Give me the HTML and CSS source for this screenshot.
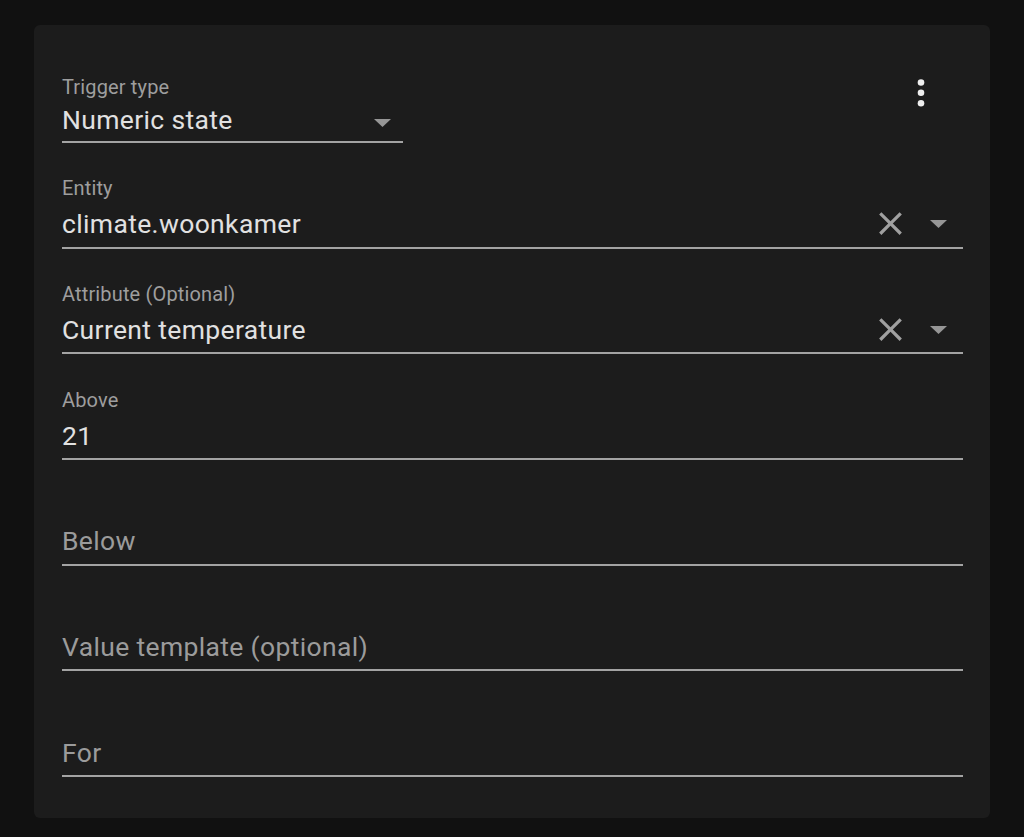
FILE: index.html
```html
<!DOCTYPE html>
<html lang="en">
<head>
<meta charset="utf-8">
<title>Numeric state trigger</title>
<link rel="stylesheet" href="styles.css">
</head>
<body>
<div class="card">
  <div class="row-top">
    <div class="field field-select">
      <div class="label">Trigger type</div>
      <div class="value-row">
        <span class="value">Numeric state</span>
        <svg class="caret caret-trigger" width="17" height="8" viewBox="0 0 17 8"><polygon points="0,0 17,0 8.5,8" /></svg>
      </div>
    </div>
    <div class="menu">
      <svg width="12" height="32" viewBox="0 0 12 32"><circle cx="6" cy="5.5" r="3.3"/><circle cx="6" cy="15.8" r="3.3"/><circle cx="6" cy="26.3" r="3.3"/></svg>
    </div>
  </div>

  <div class="field">
    <div class="label">Entity</div>
    <div class="value-row">
      <span class="value">climate.woonkamer</span>
      <svg class="close" width="39" height="39" viewBox="0 0 24 24"><path d="M19,6.41L17.59,5L12,10.59L6.41,5L5,6.41L10.59,12L5,17.59L6.41,19L12,13.41L17.59,19L19,17.59L13.41,12L19,6.41Z"/></svg>
      <svg class="caret" width="17" height="8" viewBox="0 0 17 8"><polygon points="0,0 17,0 8.5,8" /></svg>
    </div>
  </div>

  <div class="field">
    <div class="label">Attribute (Optional)</div>
    <div class="value-row">
      <span class="value">Current temperature</span>
      <svg class="close" width="39" height="39" viewBox="0 0 24 24"><path d="M19,6.41L17.59,5L12,10.59L6.41,5L5,6.41L10.59,12L5,17.59L6.41,19L12,13.41L17.59,19L19,17.59L13.41,12L19,6.41Z"/></svg>
      <svg class="caret" width="17" height="8" viewBox="0 0 17 8"><polygon points="0,0 17,0 8.5,8" /></svg>
    </div>
  </div>

  <div class="field">
    <div class="label">Above</div>
    <div class="value-row">
      <span class="value">21</span>
    </div>
  </div>

  <div class="field">
    <div class="value-row">
      <span class="value placeholder">Below</span>
    </div>
  </div>

  <div class="field">
    <div class="value-row">
      <span class="value placeholder">Value template (optional)</span>
    </div>
  </div>

  <div class="field">
    <div class="value-row">
      <span class="value placeholder">For</span>
    </div>
  </div>
</div>
</body>
</html>
```

FILE: styles.css
```css
html, body {
  margin: 0;
  padding: 0;
  background: #111111;
  font-family: Roboto, "Noto Sans", "Liberation Sans", sans-serif;
}

body {
  padding: 25px 0 0 34px;
  height: 837px;
  box-sizing: border-box;
}

.card {
  width: 956px;
  height: 793px;
  box-sizing: border-box;
  background: #1c1c1c;
  border-radius: 6px;
  padding: 12.33px 27px 0 28px;
}

.row-top {
  display: flex;
  justify-content: space-between;
  align-items: flex-start;
}

.field {
  height: 105.67px;
  box-sizing: border-box;
  border-bottom: 2px solid #a3a3a3;
  display: flex;
  flex-direction: column;
  justify-content: flex-end;
  padding-bottom: 4.3px;
}

.field-select {
  width: 341px;
  padding-bottom: 3px;
}

.field-select .label {
  margin-bottom: 3px;
}

.label {
  font-size: 20px;
  line-height: 24px;
  letter-spacing: 0.15px;
  color: #9e9e9e;
  margin-bottom: 6px;
}

.value-row {
  display: flex;
  align-items: center;
  height: 36px;
}

.value {
  flex: 1;
  font-size: 26.5px;
  line-height: 36px;
  letter-spacing: 0.35px;
  color: #e1e1e1;
  white-space: nowrap;
}

.value.placeholder {
  color: #9b9b9b;
}

.close {
  fill: #a0a0a0;
  margin-right: 20px;
  margin-bottom: 1px;
  flex: none;
}

.caret {
  fill: #969696;
  margin-right: 16px;
  flex: none;
}

.caret-trigger {
  margin-right: 12px;
  margin-top: 7px;
}

.menu {
  margin-top: 39.2px;
  margin-right: 36px;
  display: flex;
}

.menu svg {
  fill: #eeeeee;
}
```
